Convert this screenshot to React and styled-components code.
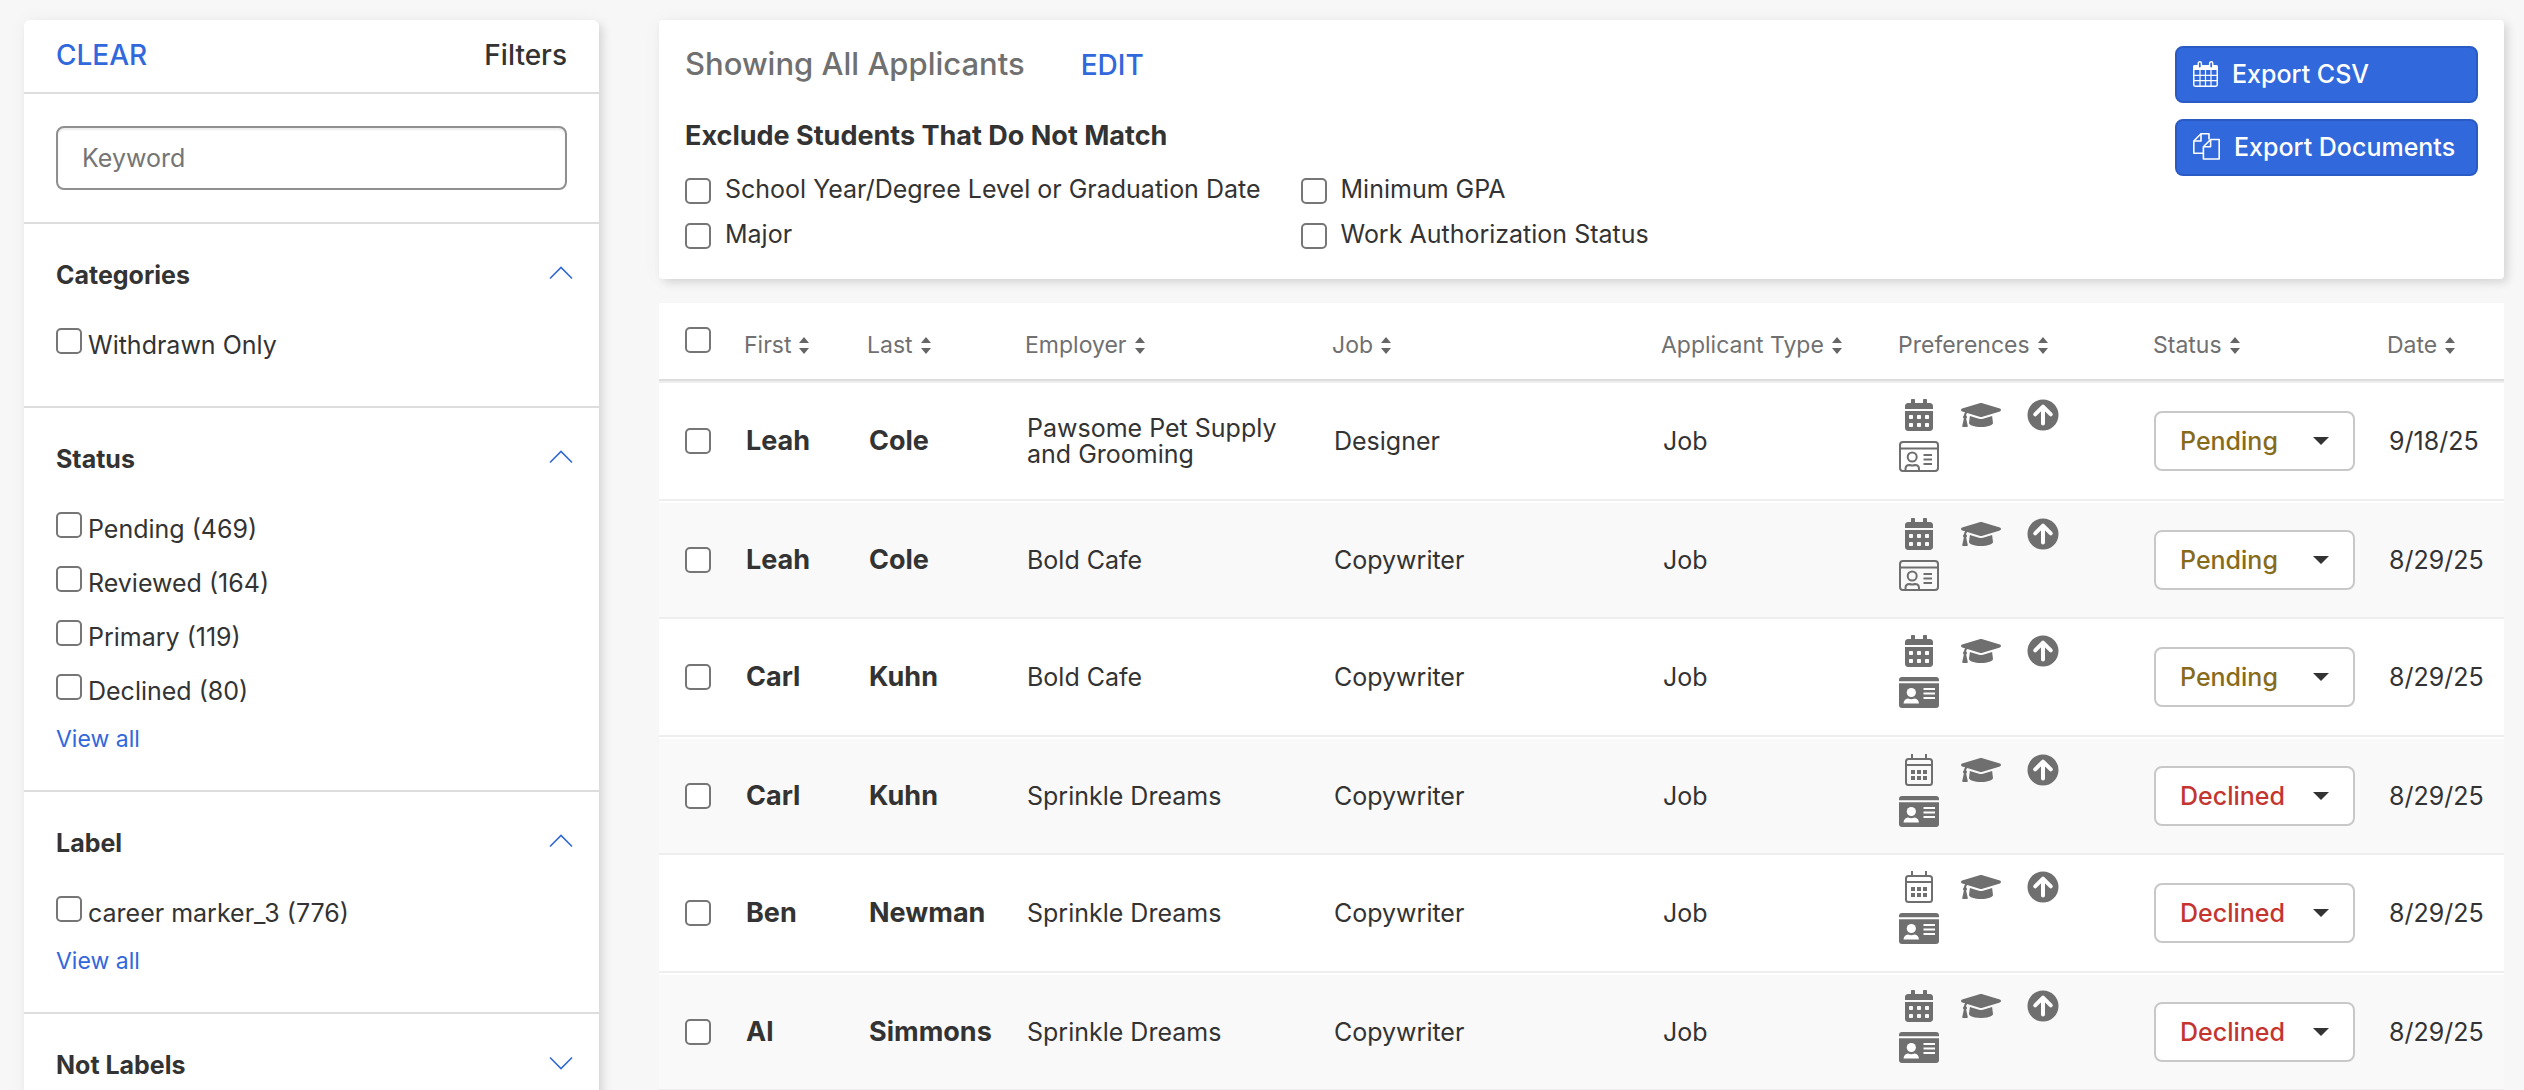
import React,{useState} from 'react'
import styled, { createGlobalStyle, css } from "styled-components"
import { FaCalendarAlt, FaGraduationCap } from "react-icons/fa"

const GlobalStyle = createGlobalStyle`
*{
    box-sizing:border-box;
}
body{
    margin:0;
    background:#f7f7f7;
    color:#333333;
    font-family:Inter, "Liberation Sans", sans-serif;
    font-size:25px;
}
button, input, select{
    font-family:inherit;
    font-size:inherit;
    color:inherit;
}
`
const Page = styled.div`
height:100vh;
overflow:auto;
scrollbar-width:none;
display:flex;
align-items:flex-start;
gap:60px;
padding:20px 20px 0 24px;
`
const cardShadow = css`
box-shadow:0 0 20px rgba(0,0,0,0.04), 4px 4px 8px rgba(0,0,0,0.11);
`
const Sidebar = styled.aside`
flex:0 0 575px;
background:#ffffff;
border-radius:6px;
${cardShadow}
`
const Main = styled.main`
flex:1;
min-width:0;
`
const TextButton = styled.button`
border:0;
padding:0;
background:none;
color:#3168db;
font-size:28px;
font-weight:500;
line-height:32px;
cursor:pointer;
`
const ViewAll = styled(TextButton)`
margin-top:8px;
font-size:23px;
font-weight:400;
line-height:30px;
`
const SidebarHeader = styled.div`
display:flex;
justify-content:space-between;
align-items:center;
height:74px;
padding:0 32px 2px;
border-bottom:2px solid #dddddd;
.title{
    font-size:28px;
    font-weight:500;
}
`
const SearchBox = styled.div`
padding:32px;
border-bottom:2px solid #dddddd;
input{
    display:block;
    width:100%;
    height:64px;
    padding:0 24px;
    border:2px solid #8f8f8f;
    border-radius:8px;
    background:#ffffff;
    box-shadow:inset 0 2px 2px rgba(0,0,0,0.08);
}
input::placeholder{
    color:#757575;
    opacity:1;
}
`
const Section = styled.section`
padding:34px 32px 36px;
border-bottom:2px solid #dddddd;
`
const SectionToggle = styled.button`
display:flex;
justify-content:space-between;
align-items:center;
width:100%;
height:34px;
border:0;
padding:0;
background:none;
font-weight:700;
cursor:pointer;
svg{
    margin:0 -6px 4px 0;
    fill:none;
    stroke:#3168db;
    stroke-width:1.6;
}
`
const OptionList = styled.div`
display:flex;
flex-direction:column;
align-items:flex-start;
padding-top:24px;
`
const Option = styled.label`
display:flex;
align-items:flex-start;
gap:6px;
height:54px;
padding-top:12px;
line-height:34px;
`
const Checkbox = styled.input.attrs({ type:"checkbox" })`
appearance:none;
flex:none;
display:block;
width:26px;
height:26px;
margin:0;
border:2px solid #767676;
border-radius:5px;
background:#ffffff;
&:checked{
    background:#3168db;
    border-color:#3168db;
}
`
const Summary = styled.div`
display:flex;
justify-content:space-between;
align-items:flex-start;
height:259px;
padding:26px;
border-radius:4px;
background:#ffffff;
${cardShadow}
`
const Heading = styled.div`
display:flex;
align-items:baseline;
gap:56px;
h1{
    margin:0;
    color:#707070;
    font-size:31px;
    font-weight:500;
    line-height:36px;
}
`
const Subheading = styled.h2`
margin:38px 0 25px;
font-size:27px;
font-weight:700;
line-height:32px;
`
const ExcludeGrid = styled.div`
display:grid;
grid-template-columns:auto auto;
justify-content:start;
column-gap:40px;
row-gap:15px;
label{
    display:flex;
    align-items:flex-start;
    gap:14px;
    height:30px;
    line-height:24px;
}
input{
    margin-top:1px;
}
`
const Actions = styled.div`
display:flex;
flex-direction:column;
gap:16px;
`
const ExportButton = styled.button`
display:flex;
align-items:center;
gap:14px;
width:303px;
height:57px;
padding:0 16px 2px;
border:2px solid #2a5bc4;
border-radius:8px;
background:#3168db;
color:#ffffff;
font-weight:500;
white-space:nowrap;
cursor:pointer;
svg{
    flex:none;
}
`
const Table = styled.table`
width:100%;
margin-top:24px;
border-spacing:0;
table-layout:fixed;
background:#ffffff;
th{
    height:78px;
    padding:8px 0 0;
    border-bottom:2px solid #dddddd;
    box-shadow:0 2px 0 #eeeeee;
    text-align:left;
    vertical-align:middle;
}
th:first-child{
    padding:0 0 2px 26px;
}
td{
    height:118px;
    padding:0 28px 0 2px;
    border-bottom:2px solid #eeeeee;
    line-height:26px;
    vertical-align:middle;
}
td:first-child{
    padding:0 0 0 26px;
}
td:last-child{
    padding-right:0;
}
tbody tr:first-child td{
    height:120px;
    padding-top:2px;
}
tbody tr:nth-child(even) td{
    background:#f9f9f9;
    border-top:2px solid #ffffff;
}
`
const SortButton = styled.button`
display:flex;
align-items:center;
gap:8px;
border:0;
padding:0;
background:none;
color:#707070;
font-size:23px;
font-weight:400;
white-space:nowrap;
cursor:pointer;
`
const Name = styled.span`
font-size:27px;
font-weight:700;
`
const Preferences = styled.div`
display:grid;
grid-template-columns:repeat(3, 40px);
justify-items:center;
column-gap:22px;
row-gap:10px;
margin:0 0 10px -1px;
color:#6f6f6f;
svg{
    display:block;
    height:32px;
}
`
const StatusField = styled.div`
display:grid;
align-items:center;
width:201px;
margin-left:-1px;
select, svg{
    grid-area:1 / 1;
}
select{
    appearance:none;
    width:100%;
    height:60px;
    padding:0 24px;
    border:2px solid #c8c8c8;
    border-radius:8px;
    background:#ffffff;
    color:${({$status})=>$status==="Pending"?"#876b1c":"#c43530"};
    font-weight:500;
}
svg{
    justify-self:end;
    margin-right:26px;
    pointer-events:none;
}
`

const Chevron = ({ open }) => (
    <svg width="24" height="14" viewBox="0 0 24 14">
        <path d={open?"M1 12.5 12 1.5 23 12.5":"M1 1.5 12 12.5 23 1.5"}/>
    </svg>
)
const SortIcon = () => (
    <svg width="10" height="17" viewBox="0 0 10 17" fill="#666666">
        <path d="M5 0 10 6H0z M5 17 0 11H10z"/>
    </svg>
)
const Caret = () => (
    <svg width="16" height="8" viewBox="0 0 16 8">
        <path d="M0 0H16L8 8z" fill="#333333"/>
    </svg>
)
const CsvIcon = () => (
    <svg width="25" height="26" viewBox="0 0 25 26" fill="none" stroke="#ffffff">
        <path d="M2 4H23A2 2 0 0 1 25 6V9H0V6A2 2 0 0 1 2 4z" fill="#ffffff" stroke="none"/>
        <rect x="0.75" y="5" width="23.5" height="20.2" rx="1.4" strokeWidth="1.5"/>
        <path d="M7 9V25M12.5 9V25M18 9V25M1 14.3H24M1 19.6H24" strokeWidth="1.2"/>
        <rect x="5.2" y="0.8" width="3.2" height="6.4" rx="1.6" fill="#3168db" strokeWidth="1.4"/>
        <rect x="16.6" y="0.8" width="3.2" height="6.4" rx="1.6" fill="#3168db" strokeWidth="1.4"/>
    </svg>
)
const DocumentsIcon = () => (
    <svg width="27" height="27" viewBox="0 0 27 27" fill="none" stroke="#ffffff" strokeWidth="1.6" strokeLinejoin="round">
        <path d="M10 20.3H0.8V8L8 0.8H16V6.5"/>
        <path d="M8 0.8V8H0.8"/>
        <path d="M17.6 6.5H26.2V26H10.4V13.7L17.6 6.5V13.7H10.4"/>
    </svg>
)
const CalendarOutline = () => (
    <svg width="28" height="32" viewBox="0 0 28 32" fill="none" stroke="currentColor" strokeWidth="2">
        <rect x="1" y="5" width="26" height="26" rx="2.5"/>
        <path d="M1 11H27M7 0V5M21 0V5"/>
        <path d="M6 16h4v4h-4zM12 16h4v4h-4zM18 16h4v4h-4zM6 22h4v4h-4zM12 22h4v4h-4zM18 22h4v4h-4z" fill="currentColor" stroke="none"/>
    </svg>
)
const ArrowUpCircle = () => (
    <svg width="32" height="32" viewBox="0 0 32 32">
        <circle cx="16" cy="16" r="15.5" fill="currentColor"/>
        <path d="M16 24.5V8.5M8.2 15.3 16 7.6 23.8 15.3" fill="none" stroke="#ffffff" strokeWidth="4" strokeLinecap="round" strokeLinejoin="round"/>
    </svg>
)
const CardOutline = () => (
    <svg width="40" height="32" viewBox="0 0 40 32" fill="none" stroke="currentColor" strokeWidth="2">
        <rect x="1" y="1" width="38" height="29" rx="3"/>
        <path d="M1 7.5H39M24.5 14H33M24.5 18.5H33M24.5 23H33"/>
        <circle cx="13.2" cy="16" r="4.5"/>
        <path d="M6.5 30V28Q6.5 24 10.5 24Q13.2 25 16 24Q20 24 20 28V30"/>
    </svg>
)
const CardSolid = () => (
    <svg width="40" height="32" viewBox="0 0 40 32">
        <rect width="40" height="31" rx="3" fill="currentColor"/>
        <path d="M0 5.2H40M24.5 12H36M24.5 16.5H36M24.5 21H36" stroke="#ffffff" strokeWidth="2"/>
        <circle cx="12.3" cy="15.5" r="4.6" fill="#ffffff"/>
        <path d="M4.5 26.5Q5 22 9 21.5Q12.3 23 15.6 21.5Q19.500 22 20 26.5z" fill="#ffffff"/>
    </svg>
)

const sections = [
    { title:"Categories", open:true, options:["Withdrawn Only"] },
    { title:"Status", open:true, options:["Pending (469)","Reviewed (164)","Primary (119)","Declined (80)"], more:true },
    { title:"Label", open:true, options:["career marker_3 (776)"], more:true },
    { title:"Not Labels", open:false, options:[] },
]
const excludeOptions = ["School Year/Degree Level or Graduation Date","Minimum GPA","Major","Work Authorization Status"]
const columns = [
    { label:"First", width:123 },
    { label:"Last", width:158 },
    { label:"Employer", width:307 },
    { label:"Job", width:329 },
    { label:"Applicant Type", width:237 },
    { label:"Preferences", width:255 },
    { label:"Status", width:234 },
    { label:"Date", width:117 },
]
const applicants = [
    { first:"Leah", last:"Cole", employer:"Pawsome Pet Supply and Grooming", job:"Designer", year:true, card:false, status:"Pending", date:"9/18/25" },
    { first:"Leah", last:"Cole", employer:"Bold Cafe", job:"Copywriter", year:true, card:false, status:"Pending", date:"8/29/25" },
    { first:"Carl", last:"Kuhn", employer:"Bold Cafe", job:"Copywriter", year:true, card:true, status:"Pending", date:"8/29/25" },
    { first:"Carl", last:"Kuhn", employer:"Sprinkle Dreams", job:"Copywriter", year:false, card:true, status:"Declined", date:"8/29/25" },
    { first:"Ben", last:"Newman", employer:"Sprinkle Dreams", job:"Copywriter", year:false, card:true, status:"Declined", date:"8/29/25" },
    { first:"Al", last:"Simmons", employer:"Sprinkle Dreams", job:"Copywriter", year:true, card:true, status:"Declined", date:"8/29/25" },
]

const FilterSection = ({ title, open, options, more }) => {
    const [ isOpen, setIsOpen ] = useState( open )
    return (
        <Section>
            <SectionToggle type="button" aria-expanded={isOpen} onClick={()=>setIsOpen((prev)=>!prev)}>
                {title}
                <Chevron open={isOpen}/>
            </SectionToggle>
            {
                isOpen&&
                (
                    <OptionList>
                        {options.map((option)=>(
                            <Option key={option}><Checkbox/>{option}</Option>
                        ))}
                        {more&&<ViewAll type="button">View all</ViewAll>}
                    </OptionList>
                )
            }
        </Section>
    )
}

const ApplicantRow = ({ first, last, employer, job, year, card, status, date }) => {
    const [ current, setCurrent ] = useState( status )
    return (
        <tr>
            <td><Checkbox aria-label={`Select ${first} ${last}`}/></td>
            <td><Name>{first}</Name></td>
            <td><Name>{last}</Name></td>
            <td>{employer}</td>
            <td>{job}</td>
            <td>Job</td>
            <td>
                <Preferences>
                    {year?<FaCalendarAlt size={32}/>:<CalendarOutline/>}
                    <FaGraduationCap size={40}/>
                    <ArrowUpCircle/>
                    {card?<CardSolid/>:<CardOutline/>}
                </Preferences>
            </td>
            <td>
                <StatusField $status={current}>
                    <select aria-label="Status" value={current} onChange={(e)=>setCurrent(e.target.value)}>
                        <option>Pending</option>
                        <option>Declined</option>
                    </select>
                    <Caret/>
                </StatusField>
            </td>
            <td>{date}</td>
        </tr>
    )
}

const App = () => {
  return (
      <Page>
        <GlobalStyle/>
        <Sidebar>
            <SidebarHeader>
                <TextButton type="button">CLEAR</TextButton>
                <span className='title'>Filters</span>
            </SidebarHeader>
            <SearchBox>
                <input type="text" placeholder="Keyword" aria-label="Keyword"/>
            </SearchBox>
            {sections.map((section)=>(
                <FilterSection key={section.title} {...section}/>
            ))}
        </Sidebar>
        <Main>
            <Summary>
                <div>
                    <Heading>
                        <h1>Showing All Applicants</h1>
                        <TextButton type="button">EDIT</TextButton>
                    </Heading>
                    <Subheading>Exclude Students That Do Not Match</Subheading>
                    <ExcludeGrid>
                        {excludeOptions.map((option)=>(
                            <label key={option}><Checkbox/>{option}</label>
                        ))}
                    </ExcludeGrid>
                </div>
                <Actions>
                    <ExportButton type="button"><CsvIcon/>Export CSV</ExportButton>
                    <ExportButton type="button"><DocumentsIcon/>Export Documents</ExportButton>
                </Actions>
            </Summary>
            <Table>
                <colgroup>
                    <col width="85"/>
                    {columns.map(({ label, width })=><col key={label} width={width}/>)}
                </colgroup>
                <thead>
                    <tr>
                        <th><Checkbox aria-label="Select all"/></th>
                        {columns.map(({ label })=>(
                            <th key={label}><SortButton type="button">{label}<SortIcon/></SortButton></th>
                        ))}
                    </tr>
                </thead>
                <tbody>
                    {applicants.map((applicant,index)=>(
                        <ApplicantRow key={index} {...applicant}/>
                    ))}
                </tbody>
            </Table>
        </Main>
      </Page>
  )
}

export default App
